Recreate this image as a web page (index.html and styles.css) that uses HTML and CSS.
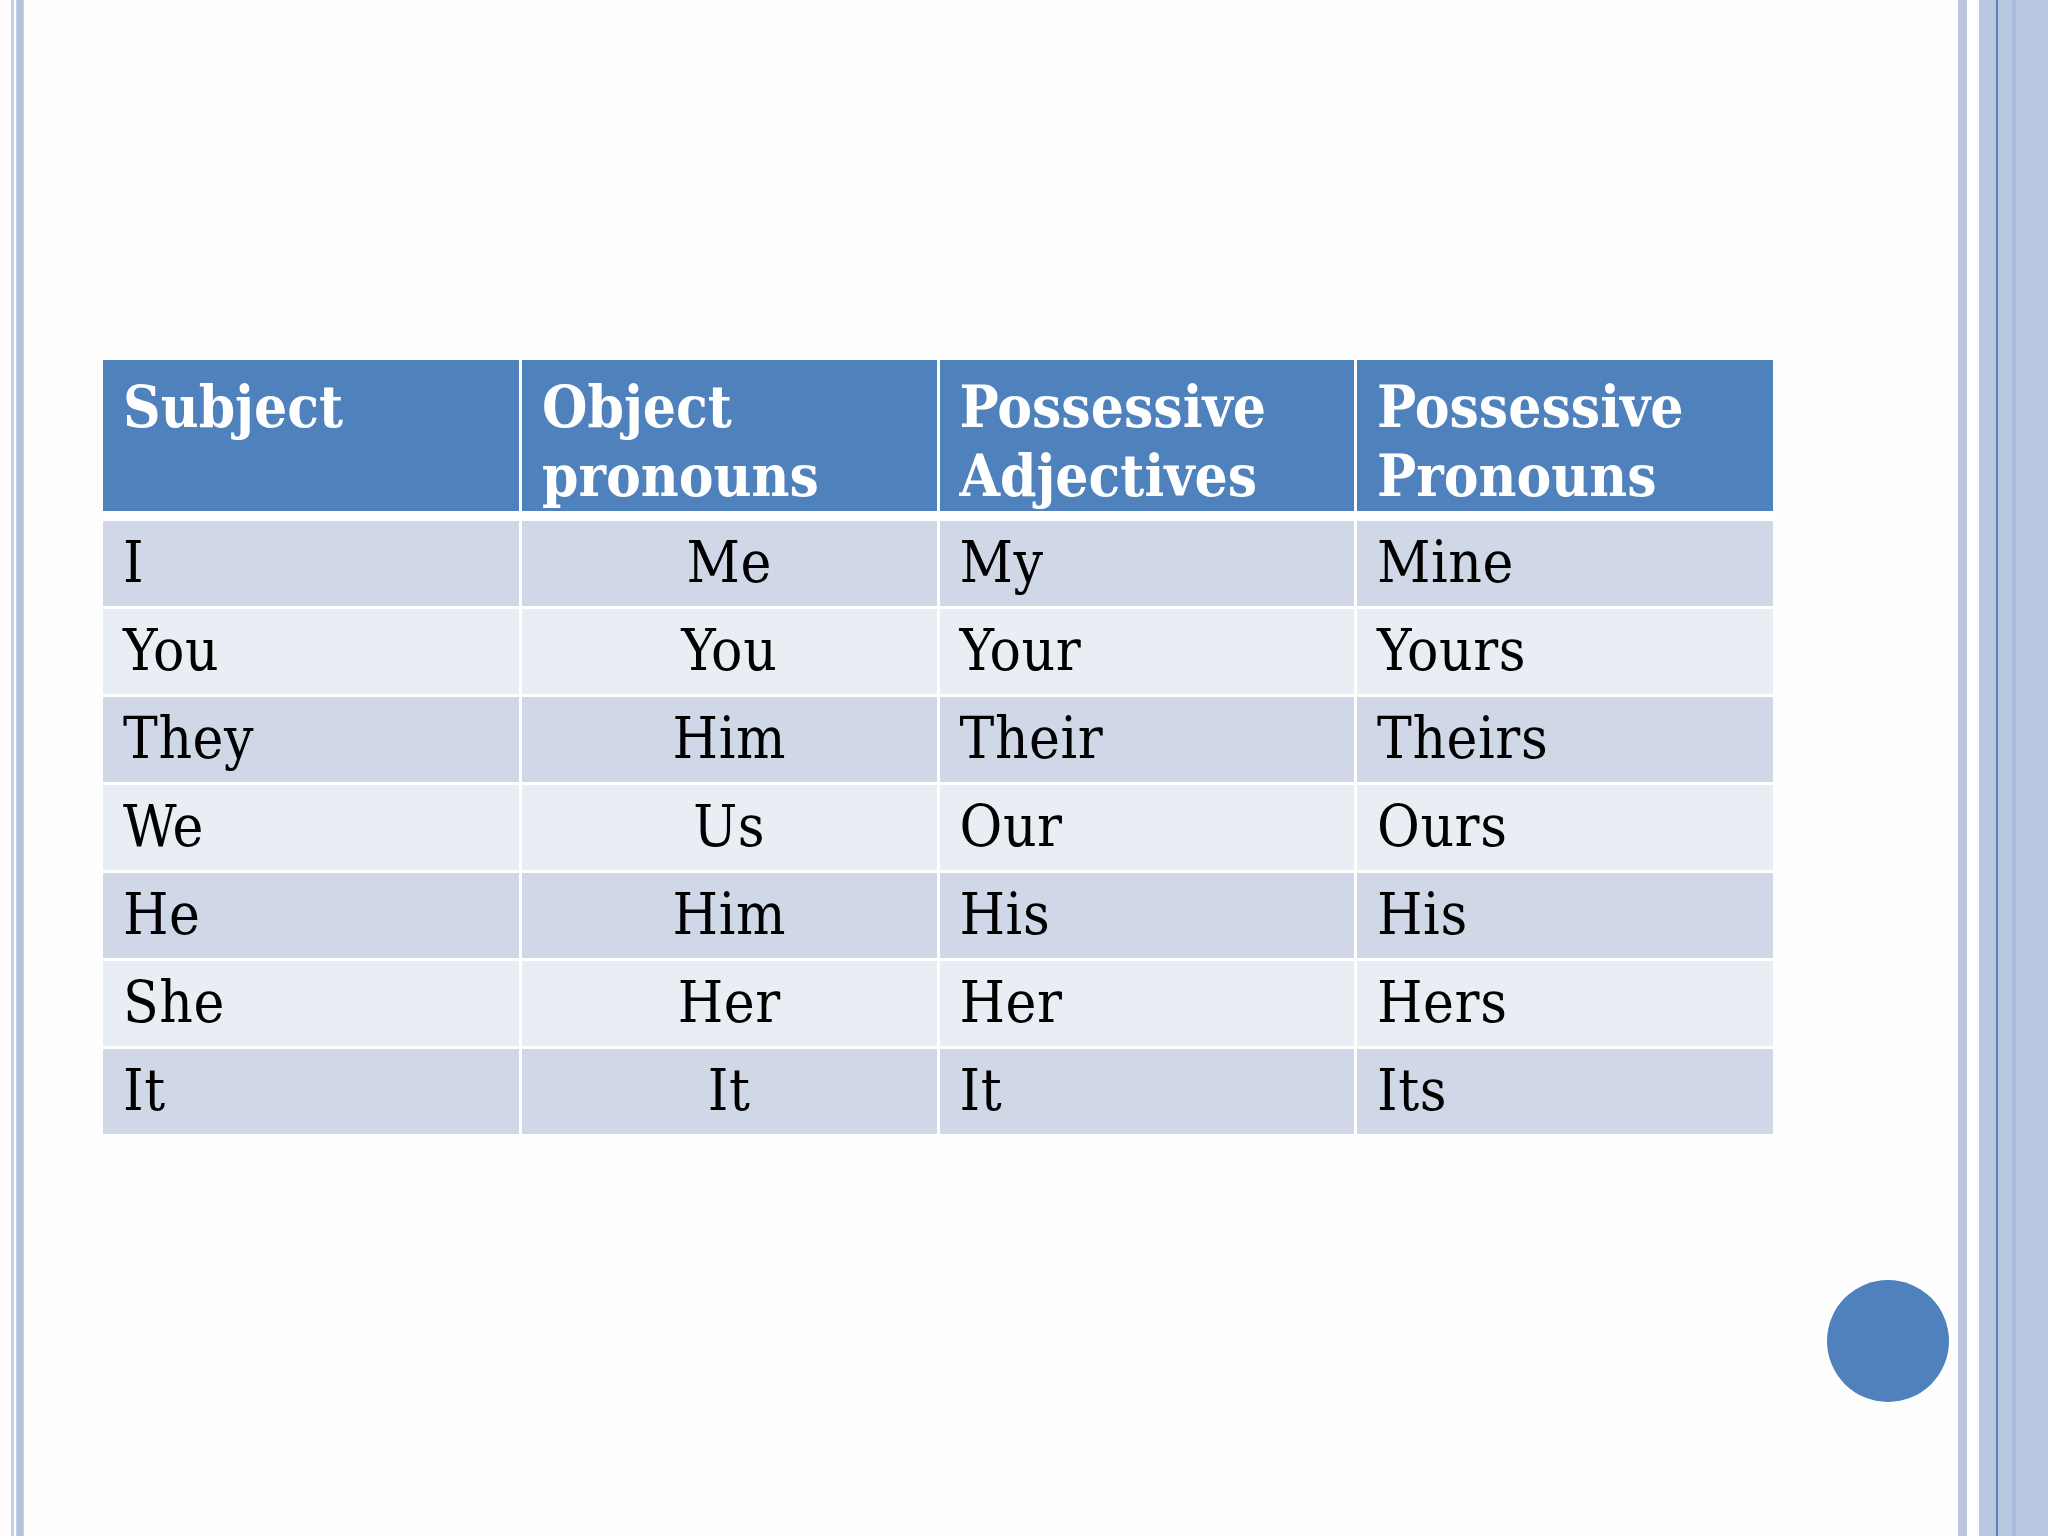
FILE: index.html
```html
<!DOCTYPE html>
<html lang="en">
<head>
<meta charset="utf-8">
<title>Pronouns</title>
<link rel="stylesheet" href="styles.css">
</head>
<body>
<div class="slide">
  <div class="frame-left">
    <div class="fl-gap1"></div>
    <div class="fl-thin"></div>
    <div class="fl-gap2"></div>
    <div class="fl-wide"></div>
  </div>
  <main class="content">
    <table class="pronouns">
      <thead>
        <tr>
          <th>Subject</th>
          <th>Object pronouns</th>
          <th>Possessive Adjectives</th>
          <th>Possessive Pronouns</th>
        </tr>
      </thead>
      <tbody>
        <tr class="odd"><td>I</td><td class="center">Me</td><td>My</td><td>Mine</td></tr>
        <tr class="even"><td>You</td><td class="center">You</td><td>Your</td><td>Yours</td></tr>
        <tr class="odd"><td>They</td><td class="center">Him</td><td>Their</td><td>Theirs</td></tr>
        <tr class="even"><td>We</td><td class="center">Us</td><td>Our</td><td>Ours</td></tr>
        <tr class="odd"><td>He</td><td class="center">Him</td><td>His</td><td>His</td></tr>
        <tr class="even"><td>She</td><td class="center">Her</td><td>Her</td><td>Hers</td></tr>
        <tr class="odd"><td>It</td><td class="center">It</td><td>It</td><td>Its</td></tr>
      </tbody>
    </table>
    <div class="dot"></div>
  </main>
  <div class="frame-right">
    <div class="fr-stripe"></div>
    <div class="fr-gap"></div>
    <div class="fr-band">
      <div class="fr-b1"></div>
      <div class="fr-line"></div>
      <div class="fr-b2"></div>
      <div class="fr-dark"></div>
      <div class="fr-b3"></div>
    </div>
  </div>
</div>
</body>
</html>
```

FILE: styles.css
```css
html, body {
  margin: 0;
  padding: 0;
  background: #ffffff;
}

.slide {
  width: 2048px;
  height: 1536px;
  display: flex;
  flex-direction: row;
  background: #fefefe;
  overflow: hidden;
}

/* Left frame lines */
.frame-left {
  display: flex;
  flex-direction: row;
  width: 24px;
  flex: none;
}
.fl-gap1 { width: 11px; }
.fl-thin { width: 3px; background: #c3cfe6; }
.fl-gap2 { width: 2px; }
.fl-wide { width: 8px; background: #b3c0dc; box-shadow: inset 1px 0 0 #c6d1e7, inset -1px 0 0 #c6d1e7; }

/* Content area */
.content {
  flex: 1;
  display: flex;
  flex-direction: column;
  padding-top: 360px;
  padding-left: 80px;
}

.pronouns {
  border-collapse: collapse;
  table-layout: fixed;
  width: 1670px;
  margin-left: -1px;
  font-family: "DejaVu Serif", "Liberation Serif", serif;
  font-stretch: condensed;
  font-size: 58px;
  line-height: 69px;
  color: #000;
}

.pronouns th,
.pronouns td {
  border: 3px solid #ffffff;
  padding: 0 10px 0 20px;
  text-align: left;
  vertical-align: top;
}

.pronouns thead tr:first-child th { border-top: none; }
.pronouns th:first-child, .pronouns td:first-child { border-left: none; }
.pronouns th:last-child, .pronouns td:last-child { border-right: none; }
.pronouns tbody tr:last-child td { border-bottom: none; }

.pronouns th {
  background: #4f81bd;
  color: #ffffff;
  font-weight: bold;
  height: 138px;
  padding-top: 13px;
  padding-bottom: 0;
  border-bottom: 10px solid #ffffff;
}

.pronouns td {
  font-weight: normal;
  letter-spacing: 0.6px;
  height: 78px;
  padding-top: 7px;
  padding-bottom: 0;
}

.pronouns td.center {
  text-align: center;
  padding-left: 15px;
  padding-right: 15px;
}

.pronouns tr.odd td { background: #d0d8e8; }
.pronouns tr.even td { background: #e9edf4; }

.dot {
  align-self: flex-end;
  width: 122px;
  height: 122px;
  border-radius: 50%;
  background: #4f81bd;
  margin-top: 146px;
  margin-right: 9px;
}

/* Right frame */
.frame-right {
  display: flex;
  flex-direction: row;
  width: 90px;
  flex: none;
}
.fr-stripe { width: 9px; background: #bcc5de; }
.fr-gap { width: 12px; background: #ffffff; }
.fr-band {
  flex: 1;
  display: flex;
  flex-direction: row;
  background: #b8c8e0;
}
.fr-b1 { width: 17px; }
.fr-line { width: 2px; background: #5a82c2; }
.fr-b2 { width: 14px; }
.fr-dark { width: 4px; background: #a9bada; }
.fr-b3 { flex: 1; }
```
